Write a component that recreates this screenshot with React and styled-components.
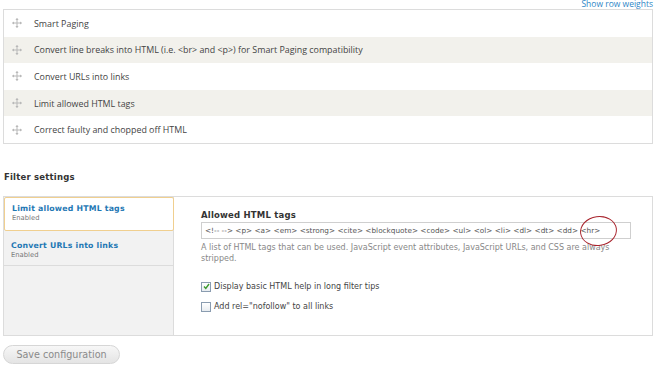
import React from 'react';
import styled, { createGlobalStyle } from 'styled-components';

const GlobalStyle = createGlobalStyle`
  html, body {
    margin: 0;
    padding: 0;
    background: #fff;
  }
  body {
    font-family: "DejaVu Sans", Verdana, sans-serif;
    color: #333;
  }
`;

const Page = styled.div`
  position: relative;
  width: 662px;
  height: 370px;
  overflow: hidden;
  padding: 0 9px 0 3px;
  box-sizing: border-box;
`;

const TopBar = styled.div`
  display: flex;
  justify-content: flex-end;
  height: 9px;
`;

const WeightsLink = styled.a`
  font-family: "Open Sans", sans-serif;
  font-size: 8.5px;
  line-height: 8px;
  color: #2f86c6;
  text-decoration: none;
`;

const FilterTable = styled.div`
  border: 1px solid #dcdcdc;
  display: flex;
  flex-direction: column;
`;

const Row = styled.div`
  display: flex;
  align-items: center;
  height: 26.6px;
  padding-left: 8px;
  gap: 12px;
  background: ${(p) => (p.shaded ? '#f2f1ec' : '#fff')};
  font-family: "Open Sans", sans-serif;
  font-size: 8.9px;
  color: #444;
`;

const Handle = () => (
  <svg width="10" height="10" viewBox="0 0 10 10">
    <g stroke="#b8b8b8" strokeWidth="1" fill="none">
      <path d="M5 0.5v9M0.5 5h9" />
    </g>
    <g fill="#b8b8b8">
      <path d="M5 0l1.6 2H3.4zM5 10l1.6-2H3.4zM0 5l2-1.6v3.2zM10 5l-2-1.6v3.2z" />
    </g>
  </svg>
);

const SectionTitle = styled.h3`
  margin: 28px 0 0 1px;
  font-size: 8.5px;
  font-weight: bold;
  color: #333;
  letter-spacing: 0.2px;
`;

const VerticalTabs = styled.div`
  margin-top: 14px;
  display: flex;
  border: 1px solid #dcdcdc;
  height: 140px;
  box-sizing: border-box;
`;

const TabList = styled.div`
  width: 169px;
  flex-shrink: 0;
  background: #f2f2f2;
  border-right: 1px solid #dcdcdc;
  display: flex;
  flex-direction: column;
`;

const Tab = styled.div`
  box-sizing: border-box;
  padding: 0 7px;
  background: ${(p) => (p.active ? '#fff' : 'transparent')};
  border: ${(p) => (p.active ? '1px solid #f0cf8f' : 'none')};
  border-bottom: ${(p) => (p.active ? '1px solid #f0cf8f' : '1px solid #dcdcdc')};
  border-radius: ${(p) => (p.active ? '2px' : '0')};
  margin-right: ${(p) => (p.active ? '-1px' : '0')};
  padding-top: ${(p) => (p.active ? '6px' : '10px')};
  height: ${(p) => (p.active ? '34px' : '35px')};
`;

const TabTitle = styled.div`
  font-size: 7.8px;
  font-weight: bold;
  color: #1f78b4;
  letter-spacing: 0.2px;
`;

const TabSummary = styled.div`
  font-size: 6.8px;
  color: #777;
  margin-top: 1px;
`;

const Pane = styled.div`
  flex: 1;
  padding: 13px 21px 0 27px;
`;

const FieldLabel = styled.label`
  display: block;
  font-size: 8.5px;
  font-weight: bold;
  color: #333;
  letter-spacing: 0.2px;
`;

const TextInput = styled.div`
  margin-top: 2px;
  height: 17px;
  border: 1px solid #cfcfcf;
  box-sizing: border-box;
  padding: 0 3px;
  display: flex;
  align-items: center;
  font-size: 7.3px;
  color: #555;
  white-space: nowrap;
  overflow: hidden;
`;

const Description = styled.div`
  margin-top: 3px;
  font-size: 8px;
  line-height: 11px;
  color: #888;
  width: 412px;
`;

const CheckRow = styled.div`
  display: flex;
  align-items: center;
  gap: 3px;
  margin-top: ${(p) => p.top}px;
  font-size: 8px;
  color: #444;
`;

const Box = styled.span`
  width: 8px;
  height: 8px;
  border: 1px solid #8a9cb0;
  background: linear-gradient(#fff, #e8ecf0);
  display: inline-flex;
  align-items: center;
  justify-content: center;
`;

const Button = styled.button`
  margin-top: 9px;
  width: 117px;
  height: 19px;
  border: 1px solid #d6d6d6;
  border-radius: 10px;
  background: linear-gradient(#f7f7f7, #e4e4e4);
  font-family: "DejaVu Sans", sans-serif;
  font-size: 9.6px;
  color: #8a8a8a;
  padding: 0;
`;

const Annotation = styled.div`
  position: absolute;
  left: 580px;
  top: 216px;
  width: 35px;
  height: 28px;
  border: 1px solid #a8232c;
  border-radius: 50%;
  transform: rotate(-8deg);
`;

const filters = [
  'Smart Paging',
  'Convert line breaks into HTML (i.e. <br> and <p>) for Smart Paging compatibility',
  'Convert URLs into links',
  'Limit allowed HTML tags',
  'Correct faulty and chopped off HTML',
];

const Checkbox = ({ checked, label, top }) => (
  <CheckRow top={top}>
    <Box>
      {checked && (
        <svg width="7" height="7" viewBox="0 0 7 7">
          <path d="M1 3.5l1.8 2L6 1" stroke="#3d9a2e" strokeWidth="1.4" fill="none" />
        </svg>
      )}
    </Box>
    {label}
  </CheckRow>
);

export default function App() {
  return (
    <Page>
      <GlobalStyle />
      <TopBar>
        <WeightsLink href="#">Show row weights</WeightsLink>
      </TopBar>
      <FilterTable>
        {filters.map((f, i) => (
          <Row key={f} shaded={i % 2 === 1}>
            <Handle />
            {f}
          </Row>
        ))}
      </FilterTable>

      <SectionTitle>Filter settings</SectionTitle>
      <VerticalTabs>
        <TabList>
          <Tab active>
            <TabTitle>Limit allowed HTML tags</TabTitle>
            <TabSummary>Enabled</TabSummary>
          </Tab>
          <Tab>
            <TabTitle>Convert URLs into links</TabTitle>
            <TabSummary>Enabled</TabSummary>
          </Tab>
        </TabList>
        <Pane>
          <FieldLabel>Allowed HTML tags</FieldLabel>
          <TextInput>
            {'<!-- --> <p> <a> <em> <strong> <cite> <blockquote> <code> <ul> <ol> <li> <dl> <dt> <dd> <hr>'}
          </TextInput>
          <Description>
            A list of HTML tags that can be used. JavaScript event attributes, JavaScript URLs, and CSS are always stripped.
          </Description>
          <Checkbox checked top={18} label="Display basic HTML help in long filter tips" />
          <Checkbox top={10} label={'Add rel="nofollow" to all links'} />
        </Pane>
      </VerticalTabs>
      <Button>Save configuration</Button>
      <Annotation />
    </Page>
  );
}
